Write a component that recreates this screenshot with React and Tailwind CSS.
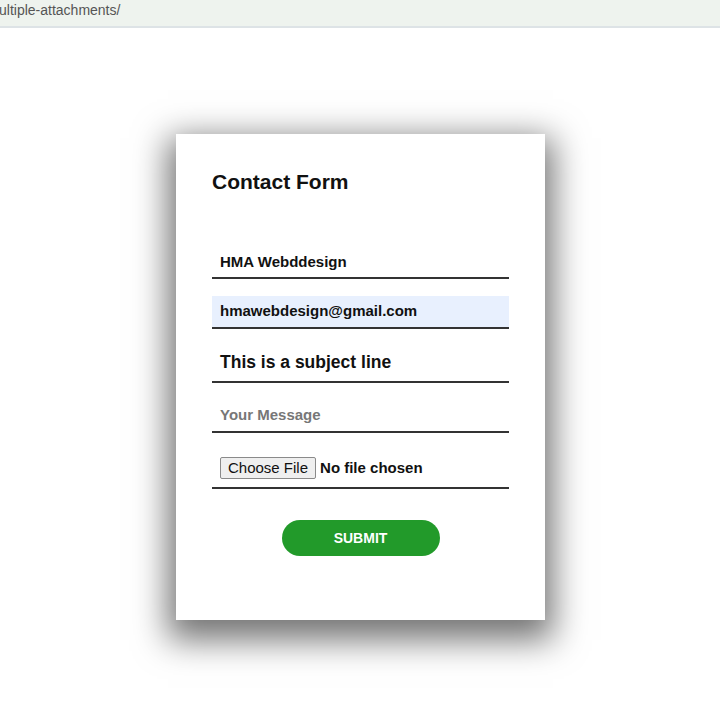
import React from 'react'

const font = { fontFamily: '"Liberation Sans", Arial, sans-serif' }

function Field({ children, className = '' }) {
  return (
    <div className={`flex items-center border-b-2 border-[#333] pl-2 ${className}`}>
      {children}
    </div>
  )
}

export default function App() {
  return (
    <div className="w-[720px] h-[720px] bg-white overflow-hidden" style={font}>
      {/* address bar strip */}
      <div className="h-[28px] bg-[#eef3ee] border-b-2 border-[#dde3e6] flex items-center">
        <span className="text-[14px] text-[#555] -ml-[1px] pb-[6px]">ultiple-attachments/</span>
      </div>

      <div className="flex justify-center pt-[106px] pl-[1px]">
        <div className="w-[369px] h-[486px] bg-white shadow-[0_12px_32px_8px_rgba(0,0,0,0.55)] pl-[36px] pr-[36px] pt-[36px]">
          <h1 className="text-[21px] font-bold text-[#111] leading-[24px]">Contact Form</h1>

          <div className="mt-[52px] flex flex-col">
            <Field className="h-[33px] pt-[2px]">
              <span className="text-[15px] font-bold text-[#111]">HMA Webddesign</span>
            </Field>
            <Field className="h-[33px] mt-[17px] bg-[#e8f0fe]">
              <span className="text-[15px] font-bold text-[#111]">hmawebdesign@gmail.com</span>
            </Field>
            <Field className="h-[38px] mt-[16px] pb-[1px]">
              <span className="text-[17.5px] font-bold text-[#111]">This is a subject line</span>
            </Field>
            <Field className="h-[33px] mt-[17px]">
              <span className="text-[15px] font-bold text-[#777]">Your Message</span>
            </Field>
            <Field className="h-[38px] mt-[18px] pb-[2px]">
              <span className="text-[15px] text-[#111] bg-[#efefef] border border-[#8a8a8a] rounded-[2px] px-[7px] leading-[20px]">
                Choose File
              </span>
              <span className="text-[15px] font-bold text-[#111] ml-[4px]">No file chosen</span>
            </Field>
          </div>

          <div className="flex justify-center mt-[31px]">
            <button className="w-[158px] h-[36px] rounded-full bg-[#229a2a] text-white text-[14px] font-bold">
              SUBMIT
            </button>
          </div>
        </div>
      </div>
    </div>
  )
}
